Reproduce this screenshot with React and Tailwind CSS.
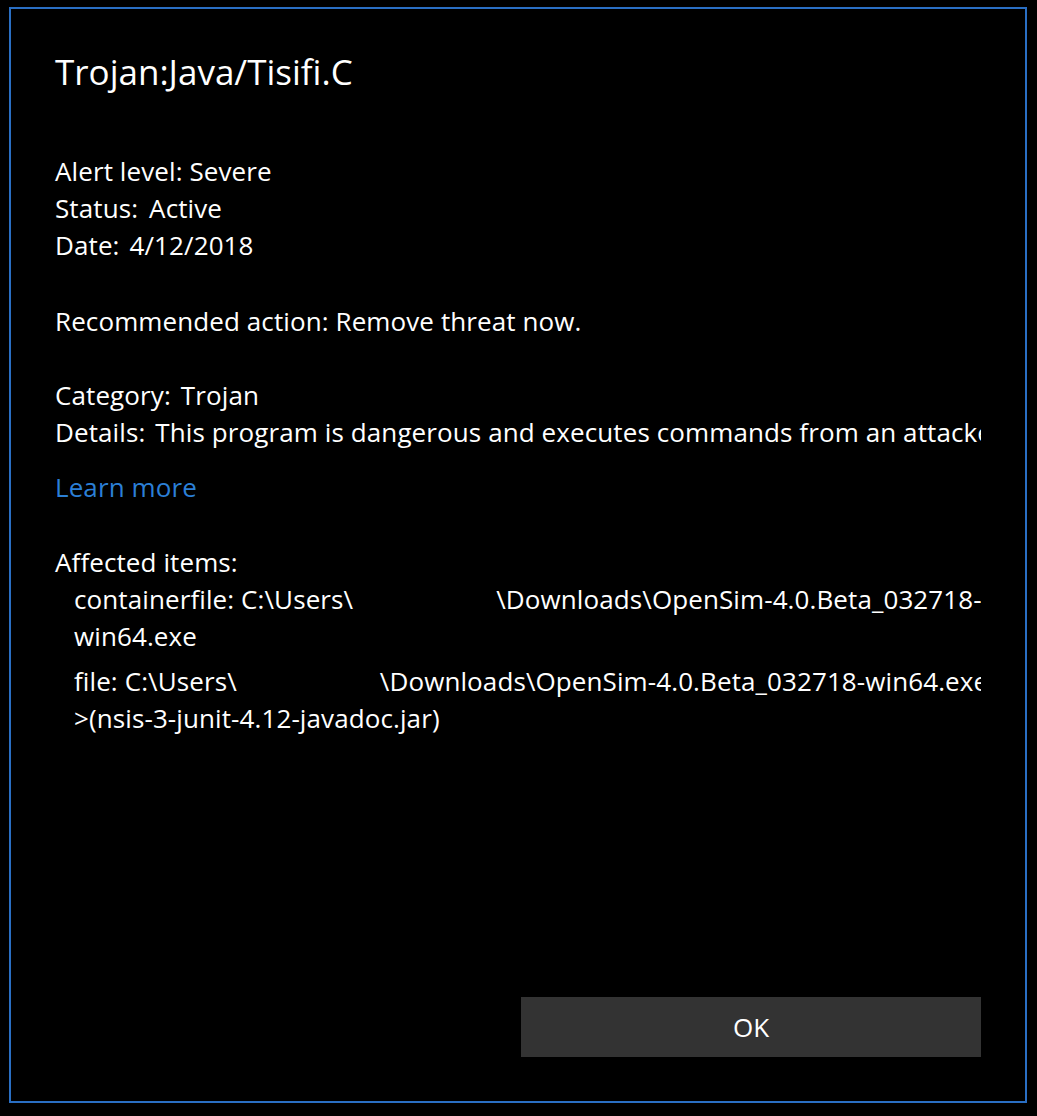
export default function App() {
  const font = { fontFamily: '"Open Sans", "Noto Sans", sans-serif' };
  return (
    <div className="w-[1037px] h-[1116px] bg-black pt-[7px] pl-[9px]" style={font}>
      <div className="w-[1018px] h-[1096px] border-2 border-[#2a6fc4] bg-black flex flex-col px-[44px] pb-[44px] text-white">
        <div className="pt-[39px] text-[35px] leading-[48px] whitespace-nowrap">Trojan:Java/Tisifi.C</div>
        <div className="mt-[57px] text-[26px] leading-[37px] tracking-[0.1px]">
          <div>Alert level: Severe</div>
          <div>Status:<span className="ml-[11px]">Active</span></div>
          <div>Date:<span className="ml-[10px]">4/12/2018</span></div>
          <div className="mt-[39px]">Recommended action: Remove threat now.</div>
          <div className="mt-[37px]">Category:<span className="ml-[10px]">Trojan</span></div>
          <div className="whitespace-nowrap overflow-hidden">Details:<span className="ml-[10px]">This program is dangerous and executes commands from an attacker.</span></div>
          <div className="mt-[18px] text-[#2b7fd6]">Learn more</div>
          <div className="mt-[38px]">Affected items:</div>
          <div className="pl-[19px]">
            <div className="whitespace-nowrap overflow-hidden">
              containerfile: C:\Users\<span className="inline-block w-[143px]"></span>\Downloads\OpenSim-4.0.Beta_032718-
            </div>
            <div>win64.exe</div>
            <div className="mt-[8px] whitespace-nowrap overflow-hidden">
              file: C:\Users\<span className="inline-block w-[143px]"></span>\Downloads\OpenSim-4.0.Beta_032718-win64.exe-
            </div>
            <div>&gt;(nsis-3-junit-4.12-javadoc.jar)</div>
          </div>
        </div>
        <div className="mt-auto flex justify-end">
          <button className="w-[460px] h-[60px] bg-[#333333] text-white text-[26px]" style={font}>OK</button>
        </div>
      </div>
    </div>
  );
}
